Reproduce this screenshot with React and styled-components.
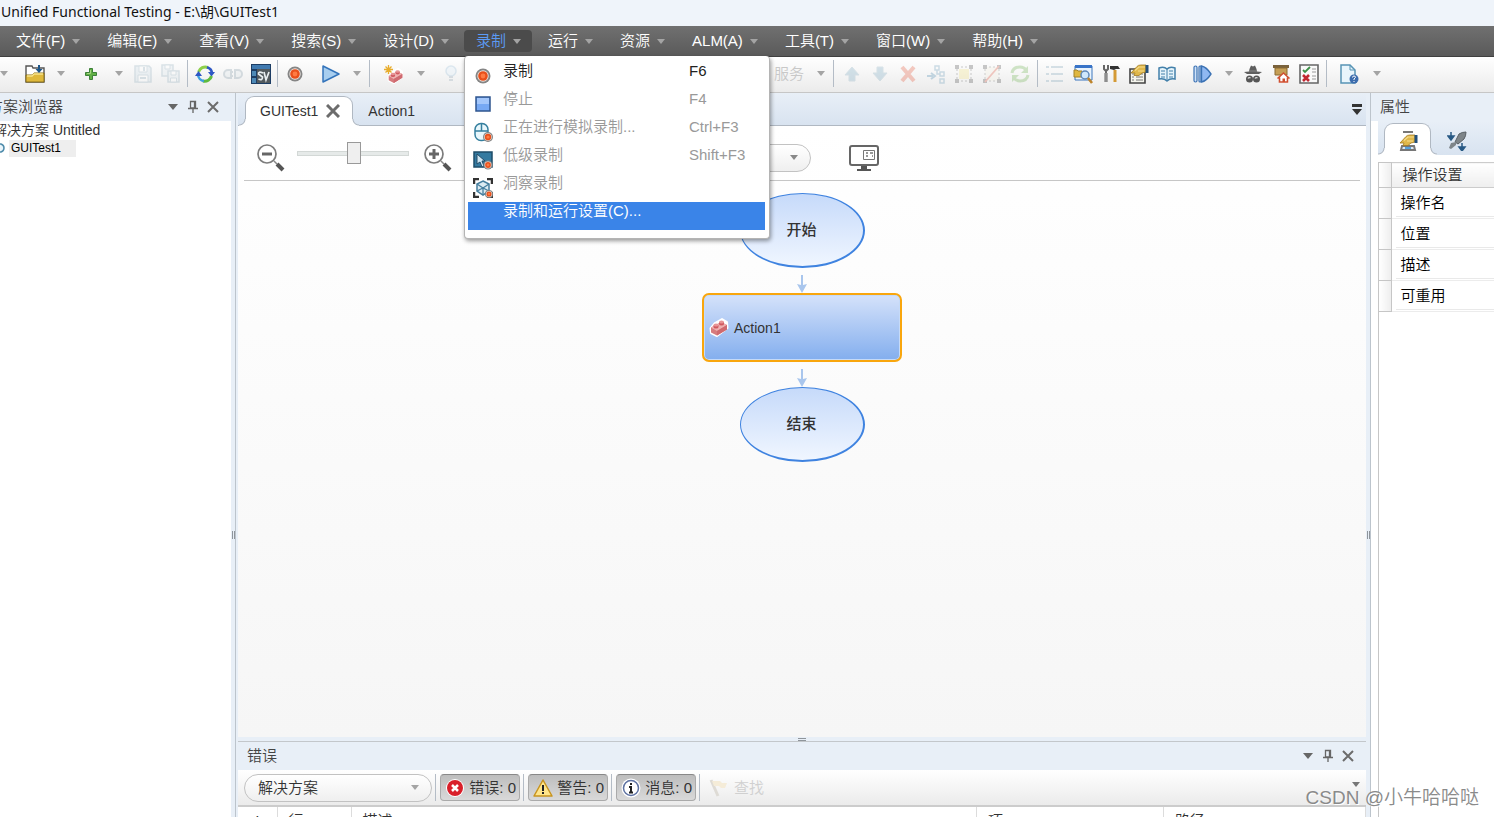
import React, { useState } from "react";
import styled, { createGlobalStyle, css } from "styled-components";

const GlobalStyle = createGlobalStyle`
  * { box-sizing: border-box; }
  body {
    margin: 0;
    overflow: hidden;
    font-family: "Liberation Sans", "Noto Sans CJK SC", sans-serif;
    font-size: 15px;
    font-weight: 350;
    line-height: 18px;
    color: #333;
  }
  button, input, select { font: inherit; color: inherit; }
  svg { display: block; flex: none; }
`;

const Page = styled.div`
  display: flex;
  flex-direction: column;
  height: 100vh;
  overflow: hidden;
  background: #e8eff7;
`;

const TitleBar = styled.header`
  flex: none;
  height: 26px;
  padding: 0 1px;
  background: #eff4fa;
  color: #111;
  font-family: "Noto Sans", "Noto Sans CJK SC", sans-serif;
  font-size: 14px;
  font-weight: 400;
  line-height: 24px;
  white-space: nowrap;
`;

const MenuBar = styled.nav`
  flex: none;
  display: flex;
  align-items: center;
  gap: 4px;
  height: 31px;
  padding: 0 4px;
  background: linear-gradient(#707070, #5a5a5a);
  border-bottom: 1px solid #404040;
`;

const MenuEntry = styled.div`
  position: relative;
`;

const MenuButton = styled.button`
  display: flex;
  align-items: center;
  gap: 7px;
  height: 22px;
  padding: 0 11px 0 12px;
  border: 0;
  border-radius: 4px;
  background: ${(props) => (props.$open ? "#4b4b4b" : "transparent")};
  color: ${(props) => (props.$open ? "#5b9bf5" : "#fff")};
  white-space: nowrap;
`;

const Caret = styled.span`
  flex: none;
  width: 0;
  height: 0;
  border: 4px solid transparent;
  border-top: 5px solid ${(props) => props.$color || "#a4a4a4"};
  border-bottom: 0;
`;

const Dropdown = styled.div`
  position: absolute;
  z-index: 10;
  top: 26px;
  left: 0;
  width: 306px;
  padding: 6px 4px 8px 3px;
  background: #fff;
  border: 1px solid #b4b4b4;
  border-top: 0;
  border-radius: 4px;
  box-shadow: 1px 2px 4px rgba(0, 0, 0, 0.4);
`;

const DropdownItem = styled.button`
  display: grid;
  grid-template-columns: 35px 186px 1fr;
  width: 100%;
  height: 28px;
  padding: 0;
  border: 0;
  text-align: left;
  background: ${(props) => (props.$selected ? "#3a84e8" : "transparent")};
  color: ${(props) => (props.$selected ? "#fff" : "#222")};

  &:disabled { color: #999; }
`;

const ItemIcon = styled.span`
  align-self: center;
  padding: 0 5px;
`;

const ToolBar = styled.div`
  flex: none;
  display: flex;
  align-items: center;
  height: 36px;
  padding-bottom: 2px;
  background: linear-gradient(#fff, #ebebeb);
  border-bottom: 1px solid #c6c6c6;
`;

const ToolButton = styled.button`
  flex: none;
  display: flex;
  align-items: center;
  justify-content: center;
  width: 28px;
  height: 28px;
  margin-left: ${(props) => props.$gap || 0}px;
  padding: 0;
  border: 0;
  background: transparent;

  &:disabled { opacity: 0.28; }
`;

const ArrowButton = styled(ToolButton)`
  width: 16px;
`;

const Separator = styled.span`
  flex: none;
  width: 1px;
  height: 27px;
  margin: 0 ${(props) => props.$after || 3}px 0 ${(props) => props.$before || 2}px;
  background: #b4bcc6;
`;

const ServiceButton = styled.button`
  flex: none;
  width: 339px;
  padding: 0;
  border: 0;
  background: transparent;
  color: #c8c8c8;
  text-align: right;
`;

const Workspace = styled.div`
  flex: 1;
  display: flex;
  min-height: 0;
`;

const SidePanel = styled.aside`
  flex: none;
  display: flex;
  flex-direction: column;
  width: 231px;
  overflow: hidden;
`;

const PanelHeader = styled.div`
  flex: none;
  display: flex;
  align-items: center;
  height: 28px;
  padding: 0 9px;
  color: #444;
  white-space: nowrap;
`;

const CutTitle = styled.span`
  margin-left: -51px;
`;

const PanelTools = styled.div`
  display: flex;
  gap: 2px;
  margin-left: auto;
`;

const PanelTool = styled.button`
  display: flex;
  align-items: center;
  justify-content: center;
  width: 18px;
  height: 18px;
  padding: 0;
  border: 0;
  background: transparent;
`;

const Tree = styled.ul`
  flex: 1;
  margin: 0;
  padding: 0;
  background: #fff;
  list-style: none;
  font-size: 14px;
  white-space: nowrap;
`;

const TreeRoot = styled.li`
  margin-left: -7px;
`;

const TreeChild = styled.li`
  display: flex;
  align-items: center;
  gap: 4px;
  height: 18px;
  color: #000;
  font-size: 12px;
`;

const TreeLabel = styled.span`
  width: 67px;
  padding: 0 2px;
  background: #eee;
  line-height: 17px;
`;

const Splitter = styled.div`
  flex: none;
  display: flex;
  align-items: center;
  justify-content: center;
  width: 5px;
  margin-right: ${(props) => props.$after || 0}px;
  padding-top: 160px;
  border-right: 1px solid #bcc4cc;
`;

const Grip = styled.span`
  width: ${(props) => (props.$flat ? 8 : 3)}px;
  height: ${(props) => (props.$flat ? 3 : 8)}px;
  border: solid #8f959b;
  border-width: ${(props) => (props.$flat ? "1px 0" : "0 1px")};
`;

const Center = styled.main`
  flex: 1;
  display: flex;
  flex-direction: column;
  min-width: 0;
`;

const TabStrip = styled.div`
  flex: none;
  display: flex;
  align-items: flex-end;
  height: 33px;
  padding: 0 4px 0 7px;
  background: linear-gradient(#e8eff7, #d8e3f0);
  border-bottom: 1px solid #b0b8c2;
`;

const Tab = styled.button`
  position: relative;
  display: flex;
  align-items: center;
  gap: 8px;
  height: 30px;
  margin-bottom: -1px;
  padding: 0 12px 2px 14px;
  border: 1px solid transparent;
  border-bottom: 0;
  border-radius: 9px 9px 0 0;
  background: transparent;
  font-size: 14px;

  ${(props) =>
    props.$active &&
    css`
      background: #fff;
      border-color: #b0b8c2;

      &::before,
      &::after {
        content: "";
        position: absolute;
        bottom: 0;
        width: 7px;
        height: 7px;
      }
      &::before {
        left: -7px;
        background: radial-gradient(circle at 0 0, transparent 5px, #b0b8c2 6px, #fff 7px);
      }
      &::after {
        right: -7px;
        background: radial-gradient(circle at 100% 0, transparent 5px, #b0b8c2 6px, #fff 7px);
      }
    `}
`;

const TabMenu = styled(PanelTool)`
  margin: 0 -4px 7px auto;
`;

const ZoomBar = styled.div`
  flex: none;
  display: flex;
  align-items: center;
  height: 55px;
  margin: 0 6px;
  padding: 9px 13px 0;
  border-bottom: 1px solid #c6c6c6;
`;

const ZoomSlider = styled.input`
  appearance: none;
  width: 112px;
  height: 24px;
  margin: 0 15px 8px 12px;
  background: transparent;

  &::-webkit-slider-runnable-track {
    height: 5px;
    background: #e6eae9;
    border: 1px solid #d3d8d6;
  }
  &::-webkit-slider-thumb {
    appearance: none;
    width: 14px;
    height: 22px;
    margin-top: -10px;
    background: #efefef;
    border: 1px solid #999;
  }
`;

const SelectWrap = styled.label`
  flex: none;
  display: flex;
  align-items: center;
  width: ${(props) => props.$width}px;
  margin: 0 ${(props) => props.$after}px 0 ${(props) => props.$before}px;
  padding-right: 12px;
  border: 1px solid #c2c2c2;
  border-radius: 15px;
  background: linear-gradient(#fff, #efefef);
`;

const Select = styled.select`
  appearance: none;
  flex: 1;
  height: 26px;
  padding: 0 13px;
  border: 0;
  background: transparent;
`;

const IconButton = styled.button`
  padding: 0;
  border: 0;
  background: transparent;
`;

const Document = styled.section`
  flex: 1;
  min-height: 0;
  background: linear-gradient(#fff, #f6f6f6);
`;

const Flow = styled.div`
  display: flex;
  flex-direction: column;
  align-items: center;
  padding-top: 12px;
`;

const Terminal = styled.div`
  display: flex;
  align-items: center;
  justify-content: center;
  width: 125px;
  height: 75px;
  border: solid #3f83e0;
  border-width: 1px 2px 2px 1px;
  border-radius: 50%;
  background: linear-gradient(#c6dafa, #f0f6ff);
  font-weight: 500;
`;

const ActionNode = styled.div`
  display: flex;
  align-items: center;
  gap: 5px;
  width: 200px;
  height: 69px;
  padding: 0 5px;
  border: 2px solid #f9a60d;
  border-radius: 7px;
  background: linear-gradient(#d5e2fa, #83aeee);
  box-shadow: inset 0 0 0 1px #c5daf8;
  font-size: 14px;
`;

const ErrorPane = styled.section`
  flex: none;
  height: 80px;
  overflow: hidden;
`;

const HSplitter = styled.div`
  display: flex;
  justify-content: center;
  align-items: flex-end;
  height: 5px;
  border-bottom: 1px solid #c3c7cb;
`;

const ErrorTools = styled.div`
  display: flex;
  align-items: center;
  height: 37px;
  padding: 0 6px;
  background: linear-gradient(#fff, #ebebeb);
  border-bottom: 2px solid #ccc;
`;

const FilterButton = styled.button`
  flex: none;
  display: flex;
  align-items: center;
  justify-content: space-between;
  width: 80px;
  height: 27px;
  padding: 0 3px 0 4px;
  border: 1px solid #aaa;
  border-top-color: #888;
  border-radius: 4px;
  background: linear-gradient(#bdbdbd, #d9d9d9);
  white-space: nowrap;
`;

const FindButton = styled.button`
  display: flex;
  align-items: center;
  gap: 6px;
  padding: 0 5px;
  border: 0;
  background: transparent;
  color: #d0d0d0;
`;

const Overflow = styled.span`
  margin: 16px 0 0 auto;
`;

const ErrorTable = styled.table`
  width: 100%;
  table-layout: fixed;
  border-collapse: collapse;
  background: #fff;
`;

const Th = styled.th`
  width: ${(props) => props.$width || "auto"};
  height: 28px;
  padding: 0 11px;
  border-right: 1px solid #dcdcdc;
  font-weight: inherit;
  text-align: ${(props) => (props.$mark ? "center" : "left")};
`;

const PropsPanel = styled.aside`
  flex: none;
  display: flex;
  flex-direction: column;
  width: 123px;
  overflow: hidden;
`;

const PropsBody = styled.div`
  flex: 1;
  padding-left: 7px;
  background: #fff;
`;

const PropsTabs = styled.div`
  display: flex;
  align-items: flex-end;
  height: 34px;
  margin-bottom: 7px;
  padding-left: 6px;
  background: linear-gradient(#e8eff7, #d8e3f0);
`;

const PropsTab = styled(Tab)`
  justify-content: center;
  width: 47px;
  height: 32px;
  margin: 0 2px 0 0;
  padding: 2px 0 0;
`;

const PropsFrame = styled.div`
  height: 100%;
  border-left: 1px solid #c6c6c6;
`;

const PropsTable = styled.table`
  width: 100%;
  border-collapse: collapse;
`;

const PropHead = styled.th`
  height: 25px;
  padding: 0 11px;
  border: solid #ccc;
  border-width: 1px 0;
  background: linear-gradient(#fff, #eee);
  font-weight: inherit;
  text-align: left;
`;

const PropGutter = styled.td`
  width: 12px;
  height: ${(props) => (props.$head ? 25 : 31)}px;
  padding: 0;
  border: solid #c6c6c6;
  border-width: 1px 1px 1px 0;
  background: linear-gradient(90deg, #fff, #eee);
`;

const PropName = styled.td`
  padding: 0 9px;
  border-bottom: 1px solid #ececec;
  box-shadow: inset 5px -2px 0 -1px #fff, inset 0 -3px 0 -1px #e9e9e9;
  color: #000;
`;

const Watermark = styled.div`
  position: absolute;
  right: 15px;
  bottom: 6px;
  color: #8a8a8a;
  font-size: 19px;
  line-height: 26px;
  text-shadow: 1px 1px 0 #fff;
`;

const Svg = ({ size = 20, children, ...rest }) => (
  <svg width={size} height={size} viewBox="0 0 20 20" fill="none" aria-hidden="true" {...rest}>
    {children}
  </svg>
);

const RecordDot = ({ x = 10, y = 10, r = 7.5 }) => (
  <g>
    <circle cx={x} cy={y} r={r} fill="#858585" />
    <circle cx={x} cy={y} r={r * 0.76} fill="#ece4e0" />
    <circle cx={x} cy={y} r={r * 0.64} fill="#e9501b" />
    <circle cx={x} cy={y} r={r * 0.32} fill="#ff7b43" />
  </g>
);

const Brick = () => (
  <g strokeLinejoin="round">
    <path d="M1.500 10.500 6 5l7-4 5 3 .5 6L8 18l-6-3Z" fill="#fff" stroke="#fff" strokeWidth="2" />
    <path d="m2 9.500 10-5.500 6 3v4.500L8 17.500l-6-3Z" fill="#d77b7e" />
    <path d="m2 9.500 10-5.500 6 3-10 6Z" fill="#efb1b1" />
    <path d="m8 13 10-6v4.500L8 17.500Z" fill="#cf6a70" />
    <path d="M4.500 7v2a2.400 1.500 0 0 0 5 0V7ZM10 4v2a2.400 1.500 0 0 0 5 0V4Z" fill="#d0595f" />
    <ellipse cx="7" cy="7" rx="2.500" ry="1.500" fill="#e79496" />
    <ellipse cx="12.500" cy="4" rx="2.500" ry="1.500" fill="#e79496" />
  </g>
);

const Hand = () => (
  <g>
    <path d="m2 9 6-6.500Q9 1 12 1h5v7l-4 1-3 2.500H5L6 9Z" fill="#e0b84b" stroke="#a27a1e" strokeWidth=".8" strokeLinejoin="round" />
    <path d="m6 6.500 4-3.500h6M9 7h6" stroke="#f5dc8b" strokeWidth="1.200" />
    <path d="M16.500 1h3v8h-3Z" fill="#24507c" />
  </g>
);

const icons = {
  open: (
    <Svg>
      <path d="M1 2h6l1 2h11v14H1Z" fill="#fff" stroke="#555" strokeWidth="1.400" />
      <path d="M1 11h6l2-2h10v9H1Z" fill="#dfb93d" stroke="#8a701a" />
      <path d="M2 12h5l2-2h9" stroke="#f8e48d" strokeWidth="1.500" />
      <path d="M14 1v5" stroke="#1c5588" strokeWidth="2" />
      <path d="M10.500 5h7L14 9Z" fill="#1c5588" />
    </Svg>
  ),
  plus: (
    <Svg>
      <path d="M8.500 4.500h3v4h4v3h-4v4h-3v-4h-4v-3h4Z" fill="#62b045" stroke="#3d8139" />
      <path d="M9.500 6v3.500H6" stroke="#a5d683" />
    </Svg>
  ),
  save: (
    <Svg>
      <path d="M2 2h14l2 2v14H2Z" fill="#c9dbe6" stroke="#88a7b8" strokeWidth="1.500" />
      <path d="M6 2h8v6H6Z M5 11h10v7H5Z" fill="#fff" stroke="#88a7b8" />
      <path d="M11 3v4M7 14h6" stroke="#88a7b8" strokeWidth="2" />
    </Svg>
  ),
  saveAll: (
    <Svg>
      <path d="M1 1h11v11H1Z" fill="#d9e5ec" stroke="#88a7b8" strokeWidth="1.500" />
      <path d="M4 1h5v4H4Z" fill="#fff" stroke="#88a7b8" />
      <path d="M7 7h11v11H7Z" fill="#d9e5ec" stroke="#88a7b8" strokeWidth="1.500" />
      <path d="M10 7h5v4h-5ZM9.500 14h6v4h-6Z" fill="#fff" stroke="#88a7b8" />
    </Svg>
  ),
  cycle: (
    <Svg>
      <path d="M3.500 8A7 7 0 0 1 13 3.500" stroke="#8ed04a" strokeWidth="3" />
      <path d="M12 3.300A7 7 0 0 1 17 10" stroke="#2e57c4" strokeWidth="2.600" />
      <path d="M13 8h7l-3.500 4.500Z" fill="#2e57c4" />
      <path d="M16.500 12A7 7 0 0 1 8 17" stroke="#5fbb3f" strokeWidth="3" />
      <path d="M9 17a7 7 0 0 1-6-6.500" stroke="#3f9fe0" strokeWidth="2.600" />
      <path d="M0 12 3.500 7 7 12Z" fill="#2e57c4" />
    </Svg>
  ),
  link: (
    <Svg>
      <path d="M8 6H5a4 4 0 0 0 0 8h3ZM12 6h3a4 4 0 0 1 0 8h-3ZM8 8h2M8 12h2" stroke="#7d95a4" strokeWidth="2" fill="#dce5e9" />
    </Svg>
  ),
  sv: (
    <Svg>
      <path d="M0 0h20v20H0Z" fill="#1d3d64" />
      <path d="M1 1h18v4H1Z" fill="#407ab0" />
      <path d="M1 7h4v5H1ZM1 14h4v5H1Z" fill="#4d89b7" />
      <path d="M6 5h13v14H6Z" fill="#535a5e" />
      <path d="M12 9Q7 7 7.500 10l4 3q0 4-4 2M13 8l2 8 3-8" stroke="#e9eef0" strokeWidth="1.700" />
    </Svg>
  ),
  record: <Svg><RecordDot /></Svg>,
  play: (
    <Svg>
      <path d="M2 2v16l16-8Z" fill="#a8ceef" stroke="#3474bb" strokeWidth="1.500" strokeLinejoin="round" />
    </Svg>
  ),
  newAction: (
    <Svg>
      <g transform="translate(4 4) scale(.85)"><Brick /></g>
      <path d="M5.500 1v9M1 5.500h9M2.500 2.500l6 6M8.500 2.500l-6 6" stroke="#e8ad2d" strokeWidth="1.300" />
    </Svg>
  ),
  bulb: (
    <Svg>
      <circle cx="10" cy="7" r="5" fill="#dbecf8" stroke="#91b9d6" strokeWidth="1.500" />
      <path d="M8 13h4M8 16h4" stroke="#8ba1b1" strokeWidth="2" />
    </Svg>
  ),
  up: <Svg><path d="m10 3 7 8h-4v6H7v-6H3Z" fill="#6ea2bd" stroke="#84aabd" /></Svg>,
  down: <Svg><path d="m10 17 7-8h-4V3H7v6H3Z" fill="#6ea2bd" stroke="#84aabd" /></Svg>,
  remove: <Svg><path d="m4 3 12 14M16 3 4 17" stroke="#e44b2c" strokeWidth="4" /></Svg>,
  branch: (
    <Svg>
      <path d="M1 12h6M5 9l4 3-4 3" stroke="#3d81aa" strokeWidth="2" />
      <path d="M9 2h4v4H9ZM14 8h4v4h-4ZM14 15h4v4h-4ZM11 6v4h3" stroke="#5991b3" strokeWidth="1.500" />
    </Svg>
  ),
  box: (
    <Svg>
      <path d="M5 5h10v10H5Z" fill="#f3e27e" />
      <path d="M3 3h14v14H3Z" stroke="#555" strokeDasharray="2 2" />
      <path d="M1 1h4v4H1ZM15 1h4v4h-4ZM1 15h4v4H1ZM15 15h4v4h-4Z" fill="#444" />
    </Svg>
  ),
  boxOff: (
    <Svg>
      <path d="M3 3h14v14H3Z" fill="#f5f0e0" stroke="#666" strokeDasharray="2 2" />
      <path d="M1 1h4v4H1ZM15 1h4v4h-4ZM1 15h4v4H1ZM15 15h4v4h-4Z" fill="#444" />
      <path d="M3 18 17 2" stroke="#dd482e" strokeWidth="1.800" />
    </Svg>
  ),
  sync: (
    <Svg>
      <path d="M2 9q1-6 8-6 4 0 6 3M18 11q-1 6-8 6-4 0-6-3" stroke="#63ad43" strokeWidth="3" />
      <path d="M18 2v7h-7ZM2 18v-7h7Z" fill="#63ad43" />
    </Svg>
  ),
  list: <Svg><path d="M1 3h3M6 3h12M1 10h3M6 10h12M1 17h3M6 17h12" stroke="#4e839e" strokeWidth="1.700" /></Svg>,
  search: (
    <Svg>
      <path d="M2 2h17v14H2Z" fill="#e9f3fc" stroke="#3c77bd" />
      <path d="M2 1h17v3H2Z" fill="#3974c8" />
      <path d="M1 6h3l1 1h4v6H1Z" fill="#dfb741" stroke="#a3822b" />
      <circle cx="12" cy="11" r="4" fill="#cfe8fb" stroke="#5f89b8" strokeWidth="1.500" />
      <path d="m15 14 4 5" stroke="#be842a" strokeWidth="2.600" />
    </Svg>
  ),
  tools: (
    <Svg>
      <path d="M3 1v4l2 2 2-2V1M5 7v11" stroke="#666" strokeWidth="2" />
      <path d="M5 9v9" stroke="#8d8d8d" strokeWidth="3.400" />
      <path d="M9 2h8l2 3h-4l-2 1-4-1Z" fill="#333" />
      <path d="M14 6v12" stroke="#d49a35" strokeWidth="3" />
    </Svg>
  ),
  properties: (
    <Svg>
      <path d="M1 5h15v14H1Z" fill="#f5f5ed" stroke="#444" strokeWidth="1.600" />
      <path d="M3 10h2M7 10h7M3 13h2M7 13h7M3 16h2M7 16h7" stroke="#777" />
      <Hand />
    </Svg>
  ),
  book: (
    <Svg>
      <path d="M10 5Q7 2 2 4v11q5-1 8 2 3-3 8-2V4q-5-2-8 1Z" fill="#e5f3fa" stroke="#4380aa" strokeWidth="1.500" />
      <path d="M10 5v12M4 7h4M4 10h4M4 13h4M12 7h4M12 10h4M12 13h4" stroke="#4380aa" />
    </Svg>
  ),
  step: (
    <Svg>
      <rect x="1" y="2" width="3" height="16" rx="1.500" fill="#cfe2f8" stroke="#3b72b4" strokeWidth="1.200" />
      <path d="M7 2q-1 0-1 1v14q0 1 1 1h1V2Z" fill="#cfe2f8" stroke="#3b72b4" strokeWidth="1.200" />
      <path d="M8.500 2v16q5-1 9.500-8-4.500-7-9.500-8Z" fill="#8fb8f2" stroke="#3b72b4" strokeWidth="1.400" strokeLinejoin="round" />
    </Svg>
  ),
  spy: (
    <Svg>
      <path d="M6.500 5 8 1.500l2 1 2-1L13.500 5l.5 2.500 5 .5-3 2H4L1 8l5-.5Z" fill="#5e5e5e" />
      <path d="M6 7h8" stroke="#888" />
      <circle cx="6.500" cy="15" r="3.500" fill="#555" />
      <circle cx="13.500" cy="15" r="3.500" fill="#555" />
      <path d="M5 14.500q1-1.500 2.500-.5M12 14.500q1-1.500 2.500-.5" stroke="#ddd" strokeWidth="1.300" />
    </Svg>
  ),
  home: (
    <Svg>
      <path d="M2 1h16v3H2Z" fill="#7a623c" />
      <path d="M4 4h12v7H4Z" fill="#c59e55" stroke="#8b6a32" />
      <path d="m7 14 5.500-5 5.500 5v5H8v-5Z" fill="#fff" />
      <path d="m6.500 14.500 6-5.500 6 5.500M8.500 13.500V18h8v-4.500" stroke="#cf4f30" strokeWidth="1.600" />
      <path d="M11.500 14.500h2.500V18h-2.500Z" fill="#cf4f30" />
    </Svg>
  ),
  checks: (
    <Svg>
      <path d="M1 1h18v18H1Z" fill="#f9f9f9" stroke="#666" strokeWidth="1.600" />
      <path d="m4 6 2 2 5-5" stroke="#3c9147" strokeWidth="1.800" />
      <path d="m4 11 6 6M10 11l-6 6" stroke="#c22730" strokeWidth="2.600" />
      <path d="M13 5h4M13 8h4M13 12h4M13 15h4" stroke="#999" />
    </Svg>
  ),
  helpDoc: (
    <Svg>
      <path d="M2 1h9l5 5v13H2Z" fill="#e8f5fc" stroke="#5794b5" strokeWidth="1.500" />
      <path d="M11 1v5h5" stroke="#5794b5" />
      <circle cx="15" cy="15" r="4.500" fill="#3c6cad" />
      <path d="M13.500 13.500q0-1.500 1.500-1.500t1.500 1.300L15 15v1M15 17v1" stroke="#fff" />
    </Svg>
  ),
};

const menuIcons = {
  record: icons.record,
  stop: (
    <Svg>
      <path d="M3 3h14v14H3Z" fill="#77a9f4" stroke="#2f558e" strokeWidth="1.500" />
      <path d="M4 4h12v6H4Z" fill="#a4c7fb" />
    </Svg>
  ),
  analog: (
    <Svg>
      <rect x="2" y="1.500" width="13" height="17" rx="6" fill="#e8f7fc" stroke="#357f9e" strokeWidth="1.500" />
      <path d="M2 9h13M8.500 2v7" stroke="#357f9e" strokeWidth="1.500" />
      <RecordDot x={15} y={15} r={5} />
    </Svg>
  ),
  low: (
    <Svg>
      <path d="M1 2h18v15H1Z" fill="#347aa0" stroke="#1d4c68" strokeWidth="1.500" />
      <path d="m4 4 8 7H9l2 5-2 1-2-5-3 2Z" fill="#cfe6f2" stroke="#234b67" />
      <RecordDot x={15} y={15} r={4.5} />
    </Svg>
  ),
  insight: (
    <Svg>
      <path d="M1 6V1h5M14 1h5v5M1 14v5h5M19 14v5h-5" stroke="#333" strokeWidth="2.500" />
      <path d="m10 3 6 3v7l-6 4-6-4V6Z" fill="#dcebf2" stroke="#467f9f" strokeWidth="1.500" />
      <path d="m4 6 6 4 6-4M10 10v7M4 13l6-3 6 3" stroke="#467f9f" strokeWidth="1.300" />
      <RecordDot x={16} y={16} r={4} />
    </Svg>
  ),
};

const PinIcon = () => (
  <svg width="12" height="14" viewBox="0 0 12 14" fill="none">
    <path d="M3.500 1.500h5V8h-5ZM1 8.500h10M6 9v4M7.500 2v6" stroke="#666" strokeWidth="1.300" />
  </svg>
);

const CloseIcon = ({ bold }) => (
  <svg width="14" height="14" viewBox="0 0 14 14" fill="none">
    <path
      d={bold ? "m1 1 12 12M13 1 1 13" : "m2 2 10 10M12 2 2 12"}
      stroke="#6c6c6c"
      strokeWidth={bold ? 3 : 2}
    />
  </svg>
);

const Magnifier = ({ plus }) => (
  <svg width="28" height="28" viewBox="0 0 28 28" fill="none">
    <circle cx="10" cy="10" r="9" fill="#fff" stroke="#7c7c7c" strokeWidth="1.700" />
    <path d="M5 10h10" stroke="#666" strokeWidth="3" />
    {plus && <path d="M10 5v10" stroke="#666" strokeWidth="3" />}
    <path d="m17 17 3 3" stroke="#888" strokeWidth="1.500" />
    <path d="m20 20 6 6" stroke="#555" strokeWidth="4" />
  </svg>
);

const FlowArrow = () => (
  <svg width="12" height="25" viewBox="0 0 12 25">
    <path d="M5 7h2v10l4-1-5 9-5-9 4 1Z" fill="#a9c6ed" />
  </svg>
);

const menus = ["文件(F)", "编辑(E)", "查看(V)", "搜索(S)", "设计(D)", "录制", "运行", "资源", "ALM(A)", "工具(T)", "窗口(W)", "帮助(H)"];

const recordItems = [
  { label: "录制", keys: "F6", icon: "record" },
  { label: "停止", keys: "F4", icon: "stop", disabled: true },
  { label: "正在进行模拟录制...", keys: "Ctrl+F3", icon: "analog", disabled: true },
  { label: "低级录制", keys: "Shift+F3", icon: "low", disabled: true },
  { label: "洞察录制", icon: "insight", disabled: true },
  { label: "录制和运行设置(C)...", selected: true },
];

const Tool = ({ name, gap, off }) => (
  <ToolButton $gap={gap} disabled={off} aria-label={name}>{icons[name]}</ToolButton>
);

const Arrow = ({ gap = 6 }) => (
  <ArrowButton $gap={gap} aria-label="more"><Caret /></ArrowButton>
);

const HeaderTools = () => (
  <PanelTools>
    <PanelTool aria-label="menu">
      <svg width="12" height="6" viewBox="0 0 12 6"><path d="M1 0h10L6 6Z" fill="#666" /></svg>
    </PanelTool>
    <PanelTool aria-label="pin"><PinIcon /></PanelTool>
    <PanelTool aria-label="close"><CloseIcon /></PanelTool>
  </PanelTools>
);

const MainToolbar = () => (
  <ToolBar>
    <Caret />
    <Tool name="open" gap={13} />
    <Arrow gap={4} />
    <Tool name="plus" gap={8} />
    <Arrow />
    <Tool name="save" gap={2} off />
    <Tool name="saveAll" off />
    <Separator />
    <Tool name="cycle" />
    <Tool name="link" off />
    <Tool name="sv" />
    <Separator />
    <Tool name="record" />
    <Tool name="play" gap={8} />
    <Arrow gap={4} />
    <Separator $before={4} $after={9} />
    <Tool name="newAction" />
    <Arrow />
    <Tool name="bulb" gap={8} off />
    <ServiceButton disabled>服务</ServiceButton>
    <Arrow gap={9} />
    <Separator $before={4} $after={4} />
    <Tool name="up" off />
    <Tool name="down" off />
    <Tool name="remove" off />
    <Tool name="branch" off />
    <Tool name="box" off />
    <Tool name="boxOff" off />
    <Tool name="sync" off />
    <Separator $before={3} />
    <Tool name="list" off />
    <Tool name="search" />
    <Tool name="tools" />
    <Tool name="properties" />
    <Tool name="book" />
    <Tool name="step" gap={8} />
    <Arrow gap={4} />
    <Tool name="spy" gap={2} />
    <Tool name="home" />
    <Tool name="checks" />
    <Separator $before={3} $after={8} />
    <Tool name="helpDoc" />
    <Arrow />
  </ToolBar>
);

const ErrorsPane = () => (
  <ErrorPane>
    <HSplitter><Grip $flat /></HSplitter>
    <PanelHeader>
      错误
      <HeaderTools />
    </PanelHeader>
    <ErrorTools>
      <SelectWrap $width={188} $before={0} $after={0}>
        <Select aria-label="范围" defaultValue="all">
          <option value="all">解决方案</option>
        </Select>
        <Caret />
      </SelectWrap>
      <Separator $after={4} $before={3} />
      <FilterButton>
        <Svg>
          <circle cx="10" cy="10" r="9" fill="#fff" />
          <circle cx="10" cy="10" r="8" fill="#d91f2a" />
          <path d="m7 7 6 6M13 7l-6 6" stroke="#fff" strokeWidth="2.500" />
        </Svg>
        错误: 0
      </FilterButton>
      <Separator $after={4} $before={3} />
      <FilterButton>
        <Svg>
          <path d="M10 2 19 18H1Z" fill="#ffe58a" stroke="#c8941f" strokeWidth="1.500" strokeLinejoin="round" />
          <path d="M10 7v6M10 14v2" stroke="#222" strokeWidth="2" />
        </Svg>
        警告: 0
      </FilterButton>
      <Separator $after={4} $before={3} />
      <FilterButton>
        <Svg>
          <circle cx="10" cy="10" r="9.500" fill="#fff" />
          <circle cx="10" cy="10" r="7.500" fill="#fff" stroke="#5d71a1" strokeWidth="1.500" />
          <path d="M10 5v2M8 9h2v5M8 14.500h4" stroke="#222" strokeWidth="2" />
        </Svg>
        消息: 0
      </FilterButton>
      <Separator $after={3} $before={3} />
      <FindButton disabled>
        <Svg>
          <path d="m3 2 7 16" stroke="#dedbd5" strokeWidth="3" />
          <path d="M4 3h8l2 2h5l-2 5h-4l-2-2H6Z" fill="#f5ecd8" />
        </Svg>
        查找
      </FindButton>
      <Overflow><Caret $color="#777" /></Overflow>
    </ErrorTools>
    <ErrorTable>
      <thead>
        <tr>
          <Th $width="39px" $mark>!</Th>
          <Th $width="74px">行</Th>
          <Th>描述</Th>
          <Th $width="187px">项</Th>
          <Th $width="202px">路径</Th>
        </tr>
      </thead>
    </ErrorTable>
  </ErrorPane>
);

const PropertiesPanel = () => (
  <PropsPanel>
    <PanelHeader>属性</PanelHeader>
    <PropsBody>
      <PropsTabs>
        <PropsTab $active aria-label="属性">
          <Svg>
            <path d="M5 1h10M4 15h12l1 4H3Z" fill="#dce9f3" stroke="#777" strokeWidth="2" />
            <path d="M7 17h6" stroke="#55a1dc" strokeWidth="2" />
            <g transform="translate(0 3)"><Hand /></g>
          </Svg>
        </PropsTab>
        <PropsTab aria-label="参数">
          <Svg>
            <path d="M4 1v6M1 5h6L4 9ZM15 12v5M12 16h6l-3 4Z" fill="#285984" stroke="#285984" strokeWidth="1.500" />
            <path d="M8 11 12 3q3-2 7-2 0 4-2 7l-6 5Z" fill="#7e8589" stroke="#596065" />
            <path d="m2 17 2-5 5-1v3l-5 4Z" fill="#7e8589" />
          </Svg>
        </PropsTab>
      </PropsTabs>
      <PropsFrame>
        <PropsTable>
          <thead>
            <tr>
              <PropGutter as="th" $head />
              <PropHead>操作设置</PropHead>
            </tr>
          </thead>
          <tbody>
            {["操作名", "位置", "描述", "可重用"].map((name) => (
              <tr key={name}>
                <PropGutter />
                <PropName>{name}</PropName>
              </tr>
            ))}
          </tbody>
        </PropsTable>
      </PropsFrame>
    </PropsBody>
  </PropsPanel>
);

const App = () => {
  const [openMenu, setOpenMenu] = useState("录制");

  return (
    <Page>
      <GlobalStyle />
      <TitleBar>Unified Functional Testing - E:\胡\GUITest1</TitleBar>
      <MenuBar>
        {menus.map((name) => (
          <MenuEntry key={name}>
            <MenuButton $open={openMenu === name} onClick={() => setOpenMenu(name)}>
              {name}
              <Caret />
            </MenuButton>
            {name === "录制" && openMenu === name && (
              <Dropdown>
                {recordItems.map((item) => (
                  <DropdownItem key={item.label} disabled={item.disabled} $selected={item.selected}>
                    <ItemIcon>{menuIcons[item.icon]}</ItemIcon>
                    <span>{item.label}</span>
                    <span>{item.keys}</span>
                  </DropdownItem>
                ))}
              </Dropdown>
            )}
          </MenuEntry>
        ))}
      </MenuBar>
      <MainToolbar />
      <Workspace>
        <SidePanel>
          <PanelHeader>
            <CutTitle>解决方案浏览器</CutTitle>
            <HeaderTools />
          </PanelHeader>
          <Tree>
            <TreeRoot>解决方案 Untitled</TreeRoot>
            <TreeChild>
              <svg width="5" height="12" viewBox="0 0 5 12">
                <path d="M0 2h1q3 1 3 4T1 10H0" fill="#eaf5fb" stroke="#4f8cab" strokeWidth="1.500" />
              </svg>
              <TreeLabel>GUITest1</TreeLabel>
            </TreeChild>
          </Tree>
        </SidePanel>
        <Splitter $after={2}><Grip /></Splitter>
        <Center>
          <TabStrip>
            <Tab $active>
              GUITest1
              <CloseIcon bold />
            </Tab>
            <Tab>Action1</Tab>
            <TabMenu aria-label="tabs">
              <svg width="12" height="11" viewBox="0 0 12 11">
                <path d="M1 0h10v3H1ZM1 5h10L6 11Z" fill="#333" />
              </svg>
            </TabMenu>
          </TabStrip>
          <Document>
            <ZoomBar>
              <IconButton aria-label="zoom out"><Magnifier /></IconButton>
              <ZoomSlider type="range" min="0" max="100" defaultValue="51" aria-label="zoom" />
              <IconButton aria-label="zoom in"><Magnifier plus /></IconButton>
              <SelectWrap $width={330} $before={29} $after={38}>
                <Select aria-label="view"><option></option></Select>
                <Caret $color="#888" />
              </SelectWrap>
              <IconButton aria-label="screen">
                <svg width="30" height="28" viewBox="0 0 30 28" fill="none">
                  <rect x="1" y="2" width="28" height="19" rx="2" fill="#fff" stroke="#666" strokeWidth="2" />
                  <path d="M14.500 6.500h11v9h-11Z" stroke="#777" />
                  <path d="M17 9h2M17 12h2M21 9h3M23 12h1" stroke="#777" strokeWidth="1.500" />
                  <path d="M12 22h6v3h4v2H8v-2h4Z" fill="#555" />
                </svg>
              </IconButton>
            </ZoomBar>
            <Flow>
              <Terminal>开始</Terminal>
              <FlowArrow />
              <ActionNode>
                <Svg><Brick /></Svg>
                Action1
              </ActionNode>
              <FlowArrow />
              <Terminal>结束</Terminal>
            </Flow>
          </Document>
          <ErrorsPane />
        </Center>
        <Splitter><Grip /></Splitter>
        <PropertiesPanel />
      </Workspace>
      <Watermark>CSDN @小牛哈哈哒</Watermark>
    </Page>
  );
};

export default App;
